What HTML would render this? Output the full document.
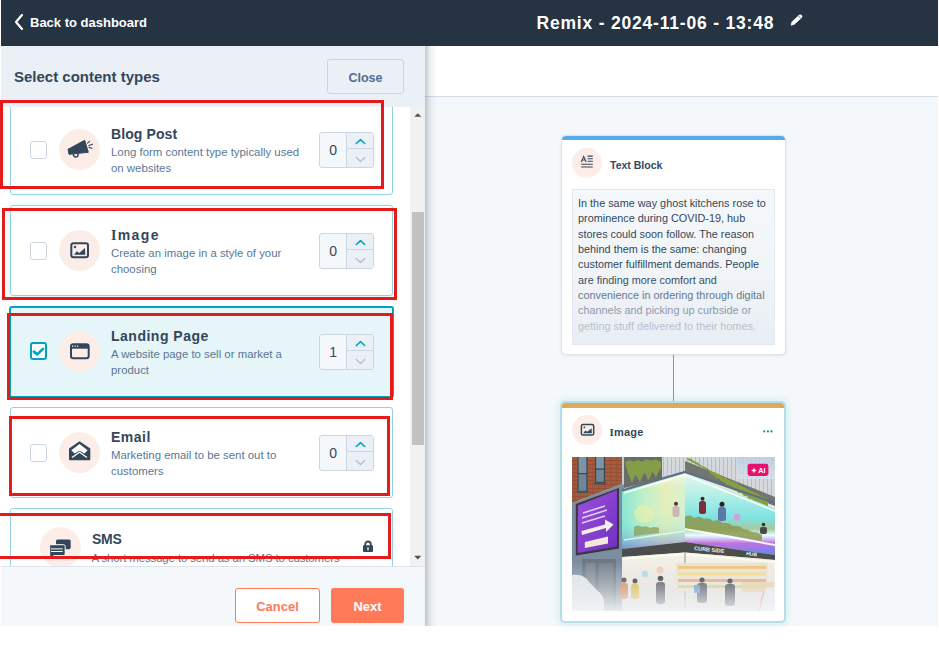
<!DOCTYPE html>
<html><head><meta charset="utf-8">
<style>
*{box-sizing:border-box;margin:0;padding:0}
html,body{width:939px;height:660px;overflow:hidden;background:#fff;font-family:"Liberation Sans",sans-serif;color:#33475b}
.abs{position:absolute}
#hdr{left:1px;top:0;width:937px;height:46px;background:#253342}
#back{left:30px;top:15.5px;color:#fff;font-weight:bold;font-size:13px;line-height:13px;white-space:nowrap}
#title{left:536.5px;top:14.8px;color:#fff;font-weight:bold;font-size:17.5px;line-height:17.5px;letter-spacing:0.8px;white-space:nowrap}
#strip{left:425px;top:46px;width:513px;height:51px;background:#fff;border-bottom:1px solid #d3dce6}
#canvas{left:425px;top:97px;width:513px;height:529px;background:#f5f8fa}
#panel{left:1px;top:46px;width:424px;height:580px;background:#eaf0f6;z-index:5}
#pshadow{left:425px;top:46px;width:12px;height:580px;background:linear-gradient(90deg,rgba(45,62,80,.28),rgba(45,62,80,.08) 45%,rgba(45,62,80,0));z-index:4}
#ptitle{left:13px;top:23px;font-weight:bold;font-size:15px;line-height:15px;color:#33475b;white-space:nowrap}
#close{left:326px;top:13px;width:77px;height:35px;border:1px solid #cbd6e2;border-radius:3px;background:#eaf0f6;color:#506e91;font-weight:bold;font-size:12.5px;text-align:center;line-height:37px}
#scroll{left:-1px;top:61px;width:425px;height:459px;background:#fff;overflow:hidden}
#track{left:410px;top:0;width:15px;height:459px;background:#f1f1f1}
#thumb{left:412px;top:105px;width:12px;height:233px;background:#c1c1c1}
#footer{left:0;top:520px;width:424px;height:60px;background:#f5f8fa;border-top:1px solid #dfe3eb}
.card{position:absolute;left:10px;width:383px;height:91px;border:1px solid #8fd4e0;border-radius:3px;background:#fff}
.card.glow{box-shadow:0 0 7px 1px rgba(0,164,189,.13)}
.card.sel{left:9px;width:385px;height:92px;border:2px solid #00a4bd;background:#e5f5f8}
.cb{position:absolute;left:29.5px;width:17.5px;height:17.5px;border:1px solid #cbd6e2;border-radius:3px;background:#fff}
.cb.ck{border:2px solid #00a4bd}
.ic{position:absolute;left:59px;width:41px;height:41px;border-radius:50%;background:#fdede9}
.ct{position:absolute;left:111px;font-weight:bold;font-size:14px;line-height:14px;color:#33475b;white-space:nowrap}
.cd{position:absolute;left:111px;width:194px;font-size:11.4px;line-height:16px;color:#5a7795}
.num{position:absolute;left:319px;width:55px;height:36px;border:1px solid #cbd6e2;border-radius:3px;background:#f5f8fa;overflow:hidden}
.num .v{position:absolute;left:0;top:0;width:26.5px;height:34px;line-height:34px;text-align:center;font-size:14px;color:#33475b}
.num .st{position:absolute;left:26px;top:0;width:28px;height:34px;background:#eaf0f6;border-left:1px solid #cbd6e2}
.num .st:after{content:"";position:absolute;left:0;top:15.3px;width:28px;height:1px;background:#cbd6e2}
.red{position:absolute;border:3px solid #e51a1a;z-index:100}
.btn{position:absolute;top:21px;height:35px;border-radius:3px;font-weight:bold;font-size:13px;text-align:center;line-height:35px}
.node{position:absolute;background:#fff;border-radius:5px}
</style></head><body>
<div id="hdr" class="abs"></div>
<svg class="abs" style="left:13px;top:13px;z-index:2" width="12" height="18" viewBox="0 0 12 18"><path d="M9 2 L3 9 L9 16" fill="none" stroke="#fff" stroke-width="2.2" stroke-linecap="round" stroke-linejoin="round"/></svg>
<div id="back" class="abs">Back to dashboard</div>
<div id="title" class="abs">Remix - 2024-11-06 - 13:48</div>
<svg class="abs" style="left:786px;top:9.4px" width="22" height="20" viewBox="0 0 22 20"><g transform="translate(5 16) scale(0.88) translate(-5 -16)"><path d="M5 16.2 L5.9 12.5 L14.4 4.7 L17.1 7.64 L8.6 15.5 Z" fill="#fff" stroke="#fff" stroke-width="0.6" stroke-linejoin="round"/><circle cx="15.76" cy="6.17" r="2" fill="#fff"/><path d="M13.4 5.6 L16.1 8.5" stroke="#253342" stroke-width="0.7"/></g></svg>
<div id="strip" class="abs"></div>
<div id="canvas" class="abs"></div>
<div class="node" style="left:561px;top:135px;width:225px;height:220px;border:1px solid #dde3ea;box-shadow:0 1px 3px rgba(45,62,80,.10);overflow:hidden">
  <div class="abs" style="left:-1px;top:-1px;width:225px;height:5px;background:#53aceb"></div>
  <div class="abs" style="left:10px;top:11.7px;width:30px;height:30px;border-radius:50%;background:#fdede9">
    <svg width="30" height="30" viewBox="0 0 30 30" style="position:absolute;left:0;top:0"><path d="M9.3 14 L11.7 8.4 L14.1 14 M10.2 12 H13.2" fill="none" stroke="#33475b" stroke-width="1.1"/><path d="M15.5 8.1 H20.8 M15.5 10.7 H20.8 M15.5 13.3 H20.8 M9.2 16.3 H20.8 M9.2 19 H20.8" stroke="#33475b" stroke-width="1.1"/></svg>
  </div>
  <div class="abs" style="left:48px;top:23.5px;font-weight:bold;font-size:10.5px;line-height:10.5px;color:#33475b;white-space:nowrap">Text Block</div>
  <div class="abs" style="left:10.4px;top:52.9px;width:203px;height:155.7px;border:1px solid #e3e8ee;background:linear-gradient(180deg,#f5f8fa 0%,#f1f5f8 50%,#e9eef5 100%)"></div>
  <div class="abs" style="left:16px;top:60.2px;width:205px;font-size:10.86px;line-height:15.3px;white-space:nowrap">
    <span style="color:#33475b">In the same way ghost kitchens rose to<br>prominence during COVID-19, hub<br>stores could soon follow. The reason<br>behind them is the same: changing<br>customer fulfillment demands. People<br></span><span style="color:#3b4e63">are finding more comfort and<br></span><span style="color:#66798d">convenience in ordering through digital<br></span><span style="color:#8c9aa9">channels and picking up curbside or<br></span><span style="color:#b6c1cc">getting stuff delivered to their homes.</span>
  </div>
</div>
<div class="abs" style="left:673px;top:355px;width:1px;height:46px;background:#8a949e"></div>
<div class="node" style="left:560px;top:401px;width:226px;height:222px;border:2px solid #b3dfe9;box-shadow:0 0 7px 2px rgba(127,209,222,.25);overflow:hidden">
  <div class="abs" style="left:0;top:0;width:222px;height:5px;background:#dcaa58"></div>
  <div class="abs" style="left:10px;top:12px;width:30px;height:30px;border-radius:50%;background:#fdede9">
    <svg width="30" height="30" viewBox="0 0 30 30" style="position:absolute;left:0;top:0"><rect x="9.4" y="9.6" width="12.3" height="10.4" rx="1.6" fill="none" stroke="#33475b" stroke-width="1.5"/><circle cx="12.4" cy="12.4" r="0.9" fill="#33475b"/><path d="M11.2 18.2 L13.4 15.6 L15.3 16.8 L19.6 13.3 L19.8 18.2 Z" fill="#33475b"/></svg>
  </div>
  <div class="abs" style="left:47.5px;top:24.2px;font-weight:bold;font-size:11px;line-height:11px;letter-spacing:0.2px;color:#33475b;white-space:nowrap"><span style="font-family:Liberation Serif">I</span>mage</div>
  <svg class="abs" style="left:200px;top:26px" width="14" height="5"><circle cx="2.2" cy="2.4" r="1.1" fill="#0091ae"/><circle cx="5.9" cy="2.4" r="1.1" fill="#0091ae"/><circle cx="9.4" cy="2.4" r="1.1" fill="#0091ae"/></svg>
  <svg class="abs" style="left:10px;top:54px" width="203" height="154" viewBox="0 0 203 154">
<defs>
<linearGradient id="sky" x1="0" y1="0" x2="0" y2="1"><stop offset="0" stop-color="#b9cfe6"/><stop offset="1" stop-color="#d9e2ea"/></linearGradient>
<linearGradient id="slats" x1="0" y1="0" x2="1" y2="0"><stop offset="0" stop-color="#c9cccf"/><stop offset="0.5" stop-color="#e2e4e6"/><stop offset="1" stop-color="#d0d4d8"/></linearGradient>
<linearGradient id="gL" x1="0" y1="0" x2="1" y2="0"><stop offset="0" stop-color="#86e6cf"/><stop offset="0.35" stop-color="#bff0c8"/><stop offset="0.7" stop-color="#e6efb8"/><stop offset="1" stop-color="#d8f2d0"/></linearGradient>
<linearGradient id="gLv" x1="0" y1="0" x2="0" y2="1"><stop offset="0" stop-color="#ffffff" stop-opacity="0.5"/><stop offset="0.2" stop-color="#ffffff" stop-opacity="0"/><stop offset="0.7" stop-color="#70d8e8" stop-opacity="0.15"/><stop offset="1" stop-color="#7050d8" stop-opacity="0.55"/></linearGradient>
<linearGradient id="gR" x1="0" y1="0" x2="0" y2="1"><stop offset="0" stop-color="#e6f6ee"/><stop offset="0.25" stop-color="#b8f0e6"/><stop offset="0.55" stop-color="#7ee2e2"/><stop offset="0.68" stop-color="#a8c8a0"/><stop offset="0.76" stop-color="#e6ffff"/><stop offset="0.86" stop-color="#c070e0"/><stop offset="1" stop-color="#5c8cf0"/></linearGradient>
<linearGradient id="store" x1="0" y1="0" x2="0" y2="1"><stop offset="0" stop-color="#f6f3ea"/><stop offset="1" stop-color="#ddd8d0"/></linearGradient>
<linearGradient id="fade" x1="0" y1="0" x2="0" y2="1"><stop offset="0" stop-color="#eef1f4" stop-opacity="0"/><stop offset="0.68" stop-color="#eef1f4" stop-opacity="0"/><stop offset="0.85" stop-color="#eef1f4" stop-opacity="0.45"/><stop offset="1" stop-color="#f2f4f7" stop-opacity="0.92"/></linearGradient>
<linearGradient id="purple" x1="0" y1="0" x2="1" y2="1"><stop offset="0" stop-color="#9f52de"/><stop offset="1" stop-color="#6e2fbf"/></linearGradient>
<pattern id="slat" width="4" height="10" patternUnits="userSpaceOnUse"><rect width="4" height="10" fill="#d6d9dc"/><rect x="3" width="1" height="10" fill="#b9bdc2"/></pattern>
<pattern id="brick" width="6" height="4" patternUnits="userSpaceOnUse"><rect width="6" height="4" fill="#a55a3b"/><rect y="3.3" width="6" height="0.7" fill="#8a4a32"/><rect x="2.6" width="0.6" height="3.3" fill="#8f4c33"/></pattern>
</defs>
<rect width="203" height="154" fill="#d3d6d9"/>
<rect x="100" y="0" width="103" height="60" fill="url(#slat)"/>
<rect x="165" y="0" width="38" height="22" fill="url(#sky)" opacity="0.8"/>
<polygon points="50,0 113,0 113,16 50,34" fill="#c9ccce"/>
<polygon points="52,0 90,0 90,22 52,31" fill="#6a6d69"/>
<path d="M53 6 q4 -5 9 -1 q3 -4 8 0 q4 -4 9 -1 q5 -3 10 1 l0 6 q-3 4 -5 10 q-2 -5 -4 -6 q-2 6 -4 9 q-1 -6 -4 -8 q-3 5 -4 10 q-2 -6 -5 -8 q-2 4 -3 9 q-1 -5 -3 -8 z" fill="#88a244" opacity="0.9"/>
<rect x="90" y="0" width="23" height="18" fill="url(#slat)"/>
<polygon points="113,4 203,40 203,52 113,16" fill="#73766f"/><polygon points="113,14 203,49 203,53 113,17" fill="#e8e4d8"/>
<path d="M114 2 q4 -2 8 2 q4 1 8 5 q5 1 9 5 q5 1 10 5 q5 2 10 5 q5 1 10 5 q5 2 10 5 q5 2 10 5 q4 1 7 3 l0 8 q-3 -1 -5 -3 q-3 4 -5 -2 q-4 2 -6 -3 q-3 3 -5 -3 q-4 1 -6 -4 q-3 3 -5 -3 q-4 1 -6 -4 q-3 2 -5 -3 q-4 1 -6 -4 q-3 2 -5 -3 q-3 1 -5 -4 z" fill="#86a040"/>
<polygon points="0,0 50,0 50,27 0,46" fill="url(#brick)"/>
<rect x="5.5" y="0" width="10" height="35" fill="#39424c"/><rect x="6.6" y="0" width="7.8" height="16" fill="#7d93a6"/><rect x="6.6" y="17.2" width="7.8" height="16.6" fill="#6f8699"/>
<rect x="4.5" y="34" width="12" height="2" fill="#4a525a"/>
<rect x="23" y="0" width="10" height="26" fill="#39424c"/><rect x="24.1" y="0" width="7.8" height="11.5" fill="#7d93a6"/><rect x="24.1" y="12.7" width="7.8" height="12.2" fill="#6f8699"/>
<rect x="22" y="25.5" width="12" height="2" fill="#4a525a"/>
<polygon points="0,46 50,27 52,28 52,154 0,154" fill="#7c8da0"/>
<polygon points="3.8,47 47,31 47,91.5 3.8,98.5" fill="#3a3740"/>
<polygon points="6,48.5 45,33 45,89.5 5.6,96" fill="url(#purple)"/>
<path d="M11 56 l22 -7 M10 61 l25 -8 M10 66 l23 -7" stroke="#f0e6ff" stroke-width="1.6" opacity="0.85"/>
<polygon points="9.5,74 33,67.5 33,62.5 41.5,67.5 34,75 34,71 10,78" fill="#f5f0e6"/>
<polygon points="12.8,85 36,79.5 36,86.5 12.8,91" fill="#f1ead8"/>
<polygon points="50,34 113,16 113,85 50,92" fill="url(#gL)"/>
<polygon points="50,34 113,16 113,85 50,92" fill="url(#gLv)"/>
<ellipse cx="72" cy="57" rx="10" ry="9" fill="#f8f0a0" opacity="0.5"/>
<polygon points="113,16 203,52 203,98 113,85" fill="url(#gR)"/>
<path d="M52 36 L113 18 L203 54" stroke="#ffffff" stroke-width="1.6" fill="none" opacity="0.9"/>
<path d="M113 72 L203 88" stroke="#ffffff" stroke-width="2" opacity="0.9"/>
<path d="M52 83 L113 74" stroke="#e8fff8" stroke-width="1.5" opacity="0.8"/>
<path d="M50 33.5 L113 15 L203 46" stroke="#5a7088" stroke-width="2.2" fill="none"/>
<path d="M113 60 q5 -4 9 1 q5 -3 10 1 q5 -2 9 2 q6 -2 10 2 q5 -1 10 3 q6 -1 10 3 q5 0 9 3 q6 0 10 3 l0 6 l-77 -13 z" fill="#8a9a4e" opacity="0.85"/>
<path d="M62 70 q4 -3 8 0 q4 -2 8 1 q5 -2 9 0 l0 5 l-25 3 z" fill="#8a9a4e" opacity="0.7"/>
<rect x="127" y="44" width="7" height="13" rx="2.5" fill="#7a2d3a"/><circle cx="130.5" cy="41.8" r="2" fill="#3a2a28"/>
<rect x="146" y="50" width="8" height="14" rx="2.5" fill="#5a78a8"/><circle cx="150" cy="47.3" r="2.5" fill="#2a2020"/>
<rect x="100.5" y="49" width="7" height="11" rx="2.5" fill="#c9b8b0"/><circle cx="104" cy="46.8" r="2" fill="#4a3a30"/>
<rect x="188" y="70" width="7" height="7" rx="2" fill="#454a4a"/><circle cx="191.5" cy="67.5" r="1.8" fill="#3a3030"/>
<circle cx="165" cy="60" r="3.5" fill="#e890d0" opacity="0.8"/>
<polygon points="50,92 113,85 203,98 203,103 113,95.5 50,100" fill="#4b4e4a"/>
<text x="122" y="93" font-family="Liberation Sans" font-size="5.5" font-weight="bold" fill="#f0f0f0" transform="rotate(6 122 93)">CURB SIDE</text>
<text x="174" y="98" font-family="Liberation Sans" font-size="5" font-weight="bold" fill="#f0f0f0" transform="rotate(8 174 98)">HUB</text>
<polygon points="50,100 113,95.5 203,103 203,154 50,154" fill="url(#store)"/>
<path d="M54 104 Q54 101 60 101 L113 97" stroke="#fffef0" stroke-width="1.4" fill="none"/>
<path d="M113 97.5 L203 105" stroke="#fffef0" stroke-width="1.4"/>
<rect x="112.5" y="95" width="1" height="59" fill="#8b9098"/>
<rect x="104" y="106" width="92" height="28" fill="#ece2cc"/>
<rect x="106" y="109" width="88" height="3" fill="#eebc6a" opacity="0.8"/>
<rect x="106" y="115.5" width="88" height="3" fill="#f2d472" opacity="0.8"/>
<rect x="106" y="122" width="88" height="3" fill="#e09068" opacity="0.8"/>
<rect x="106" y="128" width="88" height="3" fill="#b8cc80" opacity="0.8"/>
<rect x="170" y="125" width="32" height="10" fill="#e6c890" opacity="0.8"/>
<circle cx="88" cy="113" r="3.5" fill="#f0c0a0" opacity="0.7"/>
<circle cx="73" cy="117" r="3.2" fill="#8ed0e8" opacity="0.7"/>
<rect x="48" y="126" width="8" height="16" rx="3" fill="#c87a4a"/><circle cx="52" cy="123" r="2.6" fill="#4a3020"/>
<rect x="59" y="127" width="8" height="15" rx="3" fill="#d8b030"/><circle cx="63" cy="124" r="2.5" fill="#2a2020"/>
<rect x="84" y="125" width="9" height="22" rx="3" fill="#40444a"/><circle cx="88.5" cy="121.5" r="2.8" fill="#2a2a2a"/>
<rect x="125" y="126" width="10" height="20" rx="3" fill="#3a3f48"/><rect x="122" y="128" width="6" height="8" fill="#4c86c0"/><circle cx="130" cy="123" r="2.6" fill="#2a2a2a"/>
<rect x="153" y="127" width="10" height="22" rx="3" fill="#363b42"/><circle cx="158" cy="124" r="2.6" fill="#2a2a2a"/>
<polygon points="10,102 44,102 44,154 10,154" fill="#6c7784"/>
<rect x="14" y="106" width="9" height="48" fill="#7d8690"/><rect x="27" y="106" width="14" height="48" fill="#7a838d"/>
<path d="M0 118 Q12 116 18 126 L26 134 Q32 138 32 146 L32 154 L0 154 Z" fill="#dfe2e6"/>
<path d="M188 154 L192 134 Q194 130 203 130 L203 154 Z" fill="#e8e8ec"/><path d="M192 134 L187 154" stroke="#e87080" stroke-width="1.2"/>
<rect width="203" height="154" fill="url(#fade)" y="0" transform="translate(0,0)" opacity="1" style="mix-blend-mode:normal"/>
<rect x="175.6" y="6.7" width="20.8" height="12.3" rx="2.4" fill="#e8106e"/>
<text x="178.5" y="15.6" font-family="Liberation Sans" font-size="7.2" font-weight="bold" fill="#fff">✦ AI</text>
</svg>

</div>

<div id="pshadow" class="abs"></div>
<div id="panel" class="abs">
  <div id="ptitle" class="abs">Select content types</div>
  <div id="close" class="abs">Close</div>
  <div id="scroll" class="abs">
<div class="card" style="top:-3px"></div>
<div class="cb" style="top:34px"></div>
<div class="ic" style="top:22px"><svg width="41" height="41" viewBox="1 1 41 41" style="position:absolute;left:0;top:0"><path d="M10 21.3 L26.7 12.3 L30.3 24.3 L11 26.3 Z" fill="#33475b" stroke="#33475b" stroke-width="1" stroke-linejoin="round"/><path d="M15.4 25.9 C15.4 30.2 20.2 30.2 20.2 25.4" fill="none" stroke="#33475b" stroke-width="1.5"/><path d="M29.4 15.2 L31.5 13.4 M30.8 17.6 L34.6 16.3 M31.1 19.4 L34 20.3" stroke="#33475b" stroke-width="1.1" stroke-linecap="round"/></svg></div>
<div class="ct" style="top:19.5px;letter-spacing:0.1px">Blog Post</div>
<div class="cd" style="top:36.8px">Long form content type typically used on websites</div>
<div class="num" style="top:25px"><div class="v">0</div><div class="st"><svg width="27" height="33" style="position:absolute;left:0.3px;top:-0.4px"><path d="M9.3 10.5 L13.5 6.6 L17.7 10.5" fill="none" stroke="#00a4bd" stroke-width="1.6" stroke-linecap="round" stroke-linejoin="round"/><path d="M9.3 24.5 L13.5 28.4 L17.7 24.5" fill="none" stroke="#b0c1d4" stroke-width="1.4" stroke-linecap="round" stroke-linejoin="round"/></svg></div></div>
<div class="card glow" style="top:98px"></div>
<div class="cb" style="top:135px"></div>
<div class="ic" style="top:123px"><svg width="41" height="41" viewBox="1 1 41 41" style="position:absolute;left:0;top:0"><rect x="13.3" y="14.3" width="16.7" height="14" rx="2.2" fill="none" stroke="#33475b" stroke-width="2"/><circle cx="17" cy="18" r="1.2" fill="#33475b"/><path d="M16 25.7 L18.7 22.3 L21.3 24 L27 19 L27.3 25.7 Z" fill="#33475b"/></svg></div>
<div class="ct" style="top:120.5px;letter-spacing:1.35px"><span style="font-family:Liberation Serif">I</span>mage</div>
<div class="cd" style="top:137.8px">Create an image in a style of your choosing</div>
<div class="num" style="top:126px"><div class="v">0</div><div class="st"><svg width="27" height="33" style="position:absolute;left:0.3px;top:-0.4px"><path d="M9.3 10.5 L13.5 6.6 L17.7 10.5" fill="none" stroke="#00a4bd" stroke-width="1.6" stroke-linecap="round" stroke-linejoin="round"/><path d="M9.3 24.5 L13.5 28.4 L17.7 24.5" fill="none" stroke="#b0c1d4" stroke-width="1.4" stroke-linecap="round" stroke-linejoin="round"/></svg></div></div>
<div class="card sel" style="top:199px"></div>
<div class="cb ck" style="top:235px"><svg width="14" height="14" style="position:absolute;left:0;top:0"><path d="M1.9 7.6 L5.3 10.4 L11 4.9" fill="none" stroke="#00a4bd" stroke-width="2.7" stroke-linecap="round" stroke-linejoin="round"/></svg></div>
<div class="ic" style="top:224px"><svg width="41" height="41" viewBox="1 1 41 41" style="position:absolute;left:0;top:0"><rect x="13" y="14.3" width="17.7" height="14" rx="2.3" fill="none" stroke="#33475b" stroke-width="2"/><rect x="13" y="14.3" width="17.7" height="4.4" fill="#33475b"/><rect x="14" y="15.5" width="1.2" height="1.2" fill="#fff"/><rect x="16.5" y="15.5" width="1.2" height="1.2" fill="#fff"/><rect x="19" y="15.5" width="1.2" height="1.2" fill="#fff"/></svg></div>
<div class="ct" style="top:221.5px;letter-spacing:0.5px">Landing Page</div>
<div class="cd" style="top:238.8px">A website page to sell or market a product</div>
<div class="num" style="top:227px"><div class="v">1</div><div class="st"><svg width="27" height="33" style="position:absolute;left:0.3px;top:-0.4px"><path d="M9.3 10.5 L13.5 6.6 L17.7 10.5" fill="none" stroke="#00a4bd" stroke-width="1.6" stroke-linecap="round" stroke-linejoin="round"/><path d="M9.3 24.5 L13.5 28.4 L17.7 24.5" fill="none" stroke="#b0c1d4" stroke-width="1.4" stroke-linecap="round" stroke-linejoin="round"/></svg></div></div>
<div class="card" style="top:300px"></div>
<div class="cb" style="top:337px"></div>
<div class="ic" style="top:325px"><svg width="41" height="41" viewBox="1 1 41 41" style="position:absolute;left:0;top:0"><path d="M11 17.5 L21.5 10.3 L32.3 17.5 V28.3 Q32.3 29.3 31.3 29.3 H12 Q11 29.3 11 28.3 Z" fill="#33475b"/><path d="M13.3 19.2 L21.5 13 L29.6 19.2 L26.5 22.6 L21.5 19.8 L16.5 22.6 Z" fill="#fff"/><path d="M14 26.6 L21.5 21.2 L29 26.6" fill="none" stroke="#fff" stroke-width="1.2"/></svg></div>
<div class="ct" style="top:322.5px;letter-spacing:0.5px">Email</div>
<div class="cd" style="top:339.8px">Marketing email to be sent out to customers</div>
<div class="num" style="top:328px"><div class="v">0</div><div class="st"><svg width="27" height="33" style="position:absolute;left:0.3px;top:-0.4px"><path d="M9.3 10.5 L13.5 6.6 L17.7 10.5" fill="none" stroke="#00a4bd" stroke-width="1.6" stroke-linecap="round" stroke-linejoin="round"/><path d="M9.3 24.5 L13.5 28.4 L17.7 24.5" fill="none" stroke="#b0c1d4" stroke-width="1.4" stroke-linecap="round" stroke-linejoin="round"/></svg></div></div>
<div class="card" style="top:401px;height:120px"></div>
<div class="ic" style="top:419.5px;left:39.5px"><svg width="41" height="41" viewBox="2.3 2.8 41 41" style="position:absolute;left:0;top:0"><rect x="18.3" y="15.2" width="14.7" height="9.8" rx="1.6" fill="#33475b"/><path d="M12.5 20.5 H25.8 Q27.5 20.5 27.5 22.2 V29.8 Q27.5 31.5 25.8 31.5 H16 L12 35.3 V22.2 Q12 20.5 12.5 20.5 Z" fill="#33475b" stroke="#fff" stroke-width="1"/><path d="M13.3 24.7 H25 M13.3 27.3 H25" stroke="#fff" stroke-width="1"/></svg></div>
<div class="ct" style="top:425px;left:92px;letter-spacing:-0.3px">SMS</div>
<div class="cd" style="top:442.5px;left:91.5px;width:320px;letter-spacing:-0.1px">A short message to send as an SMS to customers</div>
<svg width="12" height="13" style="position:absolute;left:362px;top:433px" viewBox="0 0 12 13"><path d="M3.2 6 V4.3 A2.8 2.8 0 0 1 8.8 4.3 V6" fill="none" stroke="#33475b" stroke-width="1.8"/><rect x="1" y="5.3" width="10" height="6.8" rx="1" fill="#33475b"/><rect x="5.3" y="7.4" width="1.4" height="2.8" fill="#fff"/></svg>
    <div id="track" class="abs"><svg width="15" height="459" style="position:absolute;left:0;top:0"><path d="M4.3 9.8 L7.8 6.2 L11.3 9.8 Z" fill="#505050"/><path d="M4.3 448.8 L7.8 452.4 L11.3 448.8 Z" fill="#505050"/></svg></div>
    <div id="thumb" class="abs"></div>
  </div>
  <div id="footer" class="abs">
    <div class="btn" style="left:234px;width:85px;border:1px solid #ff7a59;background:#fff;color:#ff7a59">Cancel</div>
    <div class="btn" style="left:330px;width:73px;background:#ff7a59;color:#fff;line-height:37px">Next</div>
  </div>
</div>
<div class="red" style="left:-0.1499999999999999px;top:100.0px;width:384.4px;height:89.4px"></div>
<div class="red" style="left:1.9px;top:207.6px;width:395.20000000000005px;height:92.1px"></div>
<div class="red" style="left:6.9px;top:312.6px;width:386.25px;height:87.09999999999997px"></div>
<div class="red" style="left:9.05px;top:416.1px;width:381.25px;height:79.89999999999998px"></div>
<div class="red" style="left:-6.5px;top:512.8px;width:397.55px;height:46.0px"></div>
</body></html>
